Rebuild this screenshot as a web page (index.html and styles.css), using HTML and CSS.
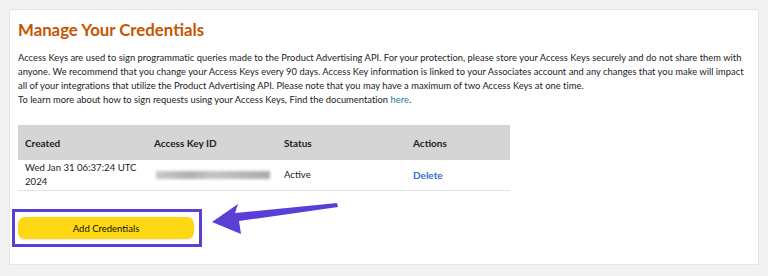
FILE: index.html
```html
<!DOCTYPE html>
<html>
<head>
<meta charset="utf-8">
<link rel="stylesheet" href="styles.css">
</head>
<body>
<div class="card">
  <h1 class="title">Manage Your Credentials</h1>
  <p class="desc">Access Keys are used to sign programmatic queries made to the Product Advertising API. For your protection, please store your Access Keys securely and do not share them with<br>anyone. We recommend that you change your Access Keys every 90 days. Access Key information is linked to your Associates account and any changes that you make will impact<br>all of your integrations that utilize the Product Advertising API. Please note that you may have a maximum of two Access Keys at one time.<br>To learn more about how to sign requests using your Access Keys, Find the documentation <a class="link" href="#">here</a>.</p>
  <table class="keys">
    <thead>
      <tr><th class="c1">Created</th><th class="c2">Access Key ID</th><th class="c3">Status</th><th class="c4">Actions</th></tr>
    </thead>
    <tbody>
      <tr><td>Wed Jan 31 06:37:24 UTC 2024</td><td><span class="blur"></span></td><td>Active</td><td><a class="del" href="#">Delete</a></td></tr>
    </tbody>
  </table>
  <div class="actions">
    <div class="highlight"><button class="btn">Add Credentials</button></div>
    <svg class="arrow" width="130" height="34" viewBox="0 0 130 34">
      <polygon points="1,19 27,1 24,10 126,0 127,4 28,18 30,31" fill="#5b3ed6"/>
    </svg>
  </div>
</div>
</body>
</html>
```
FILE: styles.css
```css
html, body { margin: 0; padding: 0; }
body {
  background: #f2f2f2;
  font-family: "Lato", "Noto Sans", sans-serif;
  color: #111;
  width: 768px;
  height: 276px;
  overflow: hidden;
}
.card {
  margin: 9px 9px 0 9px;
  width: 750px;
  height: 256px;
  box-sizing: border-box;
  background: #fff;
  border: 1px solid #e6e6e6;
  padding: 8px 6px 0 8px;
}
.title {
  margin: 0;
  font-size: 16.8px;
  line-height: 24px;
  font-weight: 700;
  color: #c45500;
}
.desc {
  margin: 9px 0 0 0;
  white-space: nowrap;
  font-size: 9.35px;
  letter-spacing: 0.02px;
  line-height: 14px;
  color: #222;
}
.link { color: #1c7b9e; text-decoration: none; }
.keys {
  margin-top: 18px;
  border-collapse: collapse;
  width: 492px;
  font-size: 9.6px;
}
.keys th {
  background: #d5d5d5;
  text-align: left;
  font-weight: 700;
  font-size: 10px;
  height: 35px;
  padding: 0 7px;
  color: #222;
}
.c1, .c2, .c3 { width: 115px; }
.keys td {
  height: 30px;
  padding: 0 7px;
  border-bottom: 1px solid #e3e3e3;
  line-height: 14px;
  vertical-align: middle;
  color: #222;
}
.blur {
  display: block;
  width: 114px;
  height: 8px;
  margin-left: 2px;
  background: linear-gradient(90deg, #c9c9c9, #b0b0b0 30%, #c4c4c4 50%, #b4b4b4 80%, #aaa);
  filter: blur(1.5px);
}
.del { color: #2f6fd0; font-weight: 700; font-size: 10px; text-decoration: none; }
.actions {
  display: flex;
  align-items: flex-start;
  margin-top: 18px;
  margin-left: -6px;
}
.highlight {
  border: 3px solid #5b3ed6;
  padding: 5px 5px 5px 3px;
  width: 176px;
}
.btn {
  display: block;
  width: 176px;
  height: 22px;
  border: none;
  border-radius: 7px;
  background: #ffd814;
  font-family: inherit;
  font-size: 9.5px;
  color: #111;
  box-shadow: 0 1px 2px rgba(0,0,0,0.1);
}
.arrow { margin-left: 9px; margin-top: -6px; }
```
